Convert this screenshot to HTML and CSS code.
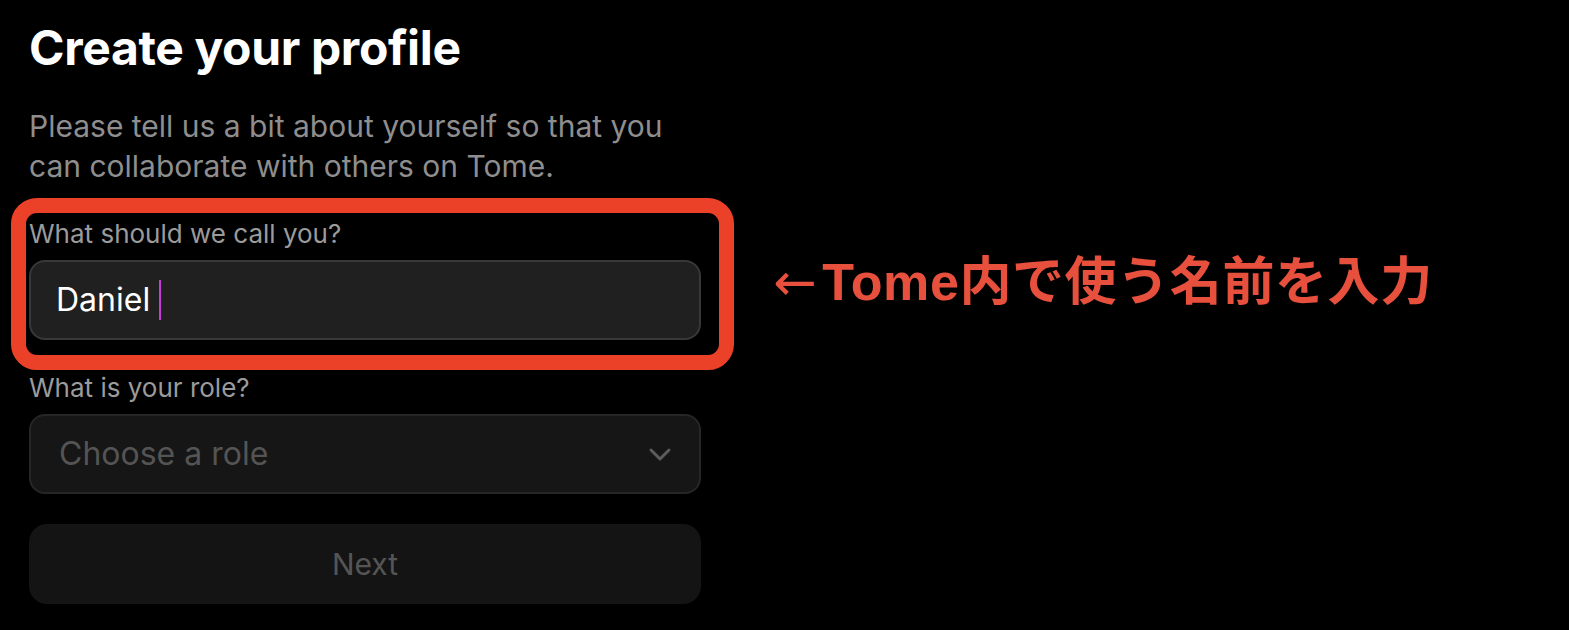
FILE: index.html
```html
<!DOCTYPE html>
<html lang="ja">
<head>
<meta charset="utf-8">
<title>Create your profile</title>
<link rel="stylesheet" href="styles.css">
</head>
<body>
<main class="page">
  <h1 class="title">Create your profile</h1>
  <p class="intro">Please tell us a bit about yourself so that you can collaborate with others on Tome.</p>
  <div class="annotated-row">
    <div class="field">
      <label class="field-label">What should we call you?</label>
      <div class="text-input"><span class="input-value">Daniel</span><span class="caret"></span></div>
      <span class="highlight-frame"></span>
    </div>
    <p class="annotation"><span class="arrow">←</span>Tome内で使う名前を入力</p>
  </div>
  <div class="field field-role">
    <label class="field-label">What is your role?</label>
    <div class="select">
      <span class="select-placeholder">Choose a role</span>
      <svg class="chevron" width="24" height="24" viewBox="0 0 24 24" aria-hidden="true">
        <polyline points="3,8 12,17 21,8" fill="none" stroke="#5c5c5c" stroke-width="3" stroke-linecap="round" stroke-linejoin="round"/>
      </svg>
    </div>
  </div>
  <button class="next-btn" type="button">Next</button>
</main>
</body>
</html>
```

FILE: styles.css
```css
* {
  box-sizing: border-box;
  margin: 0;
  padding: 0;
}

html,
body {
  background: #000;
}

body {
  font-family: Inter, "Noto Sans", sans-serif;
  color: #fff;
  width: 1569px;
  height: 630px;
  overflow: hidden;
}

.page {
  padding: 20px 0 0 29px;
  display: flex;
  flex-direction: column;
  align-items: flex-start;
}

.title {
  font-size: 48px;
  line-height: 56px;
  font-weight: 700;
  letter-spacing: -0.35px;
  color: #fff;
}

.intro {
  margin-top: 30px;
  width: 672px;
  font-size: 30px;
  line-height: 40px;
  color: #8e8e8e;
}

.annotated-row {
  margin-top: 32px;
  display: flex;
  align-items: center;
  gap: 72px;
}

.field {
  position: relative;
  width: 672px;
  display: flex;
  flex-direction: column;
  gap: 10px;
}

.field-role {
  margin-top: 32px;
}

.field-label {
  font-size: 26px;
  line-height: 32px;
  color: #9b9b9b;
}

.text-input {
  height: 80px;
  border: 2px solid #383838;
  border-radius: 16px;
  background: #202020;
  padding: 0 25px;
  display: flex;
  align-items: center;
  font-size: 32px;
  line-height: 40px;
  color: #fff;
}

.caret {
  width: 2px;
  height: 40px;
  margin-left: 9px;
  background: #c53ad8;
}

.highlight-frame {
  position: absolute;
  top: -20px;
  bottom: -30px;
  left: -18px;
  right: -33px;
  border: 15px solid #eb4129;
  border-radius: 26px;
  pointer-events: none;
}

.annotation {
  padding-top: 5px;
  font-family: "Liberation Sans", "Noto Sans CJK JP", sans-serif;
  font-weight: 700;
  font-size: 52px;
  line-height: 52px;
  letter-spacing: 0.6px;
  color: #e8503e;
  white-space: nowrap;
}

.arrow {
  font-family: "DejaVu Sans", sans-serif;
  font-weight: 400;
  margin-right: 5px;
}

.select {
  height: 80px;
  border: 2px solid #262626;
  border-radius: 16px;
  background: #161616;
  padding: 0 27px 0 28px;
  display: flex;
  align-items: center;
  justify-content: space-between;
}

.select-placeholder {
  font-size: 32px;
  line-height: 40px;
  color: #545454;
}

.chevron {
  display: block;
}

.next-btn {
  margin-top: 30px;
  width: 672px;
  height: 80px;
  border: none;
  border-radius: 18px;
  background: #141414;
  color: #555;
  font-family: Inter, "Noto Sans", sans-serif;
  font-size: 30px;
  line-height: 40px;
}
```
